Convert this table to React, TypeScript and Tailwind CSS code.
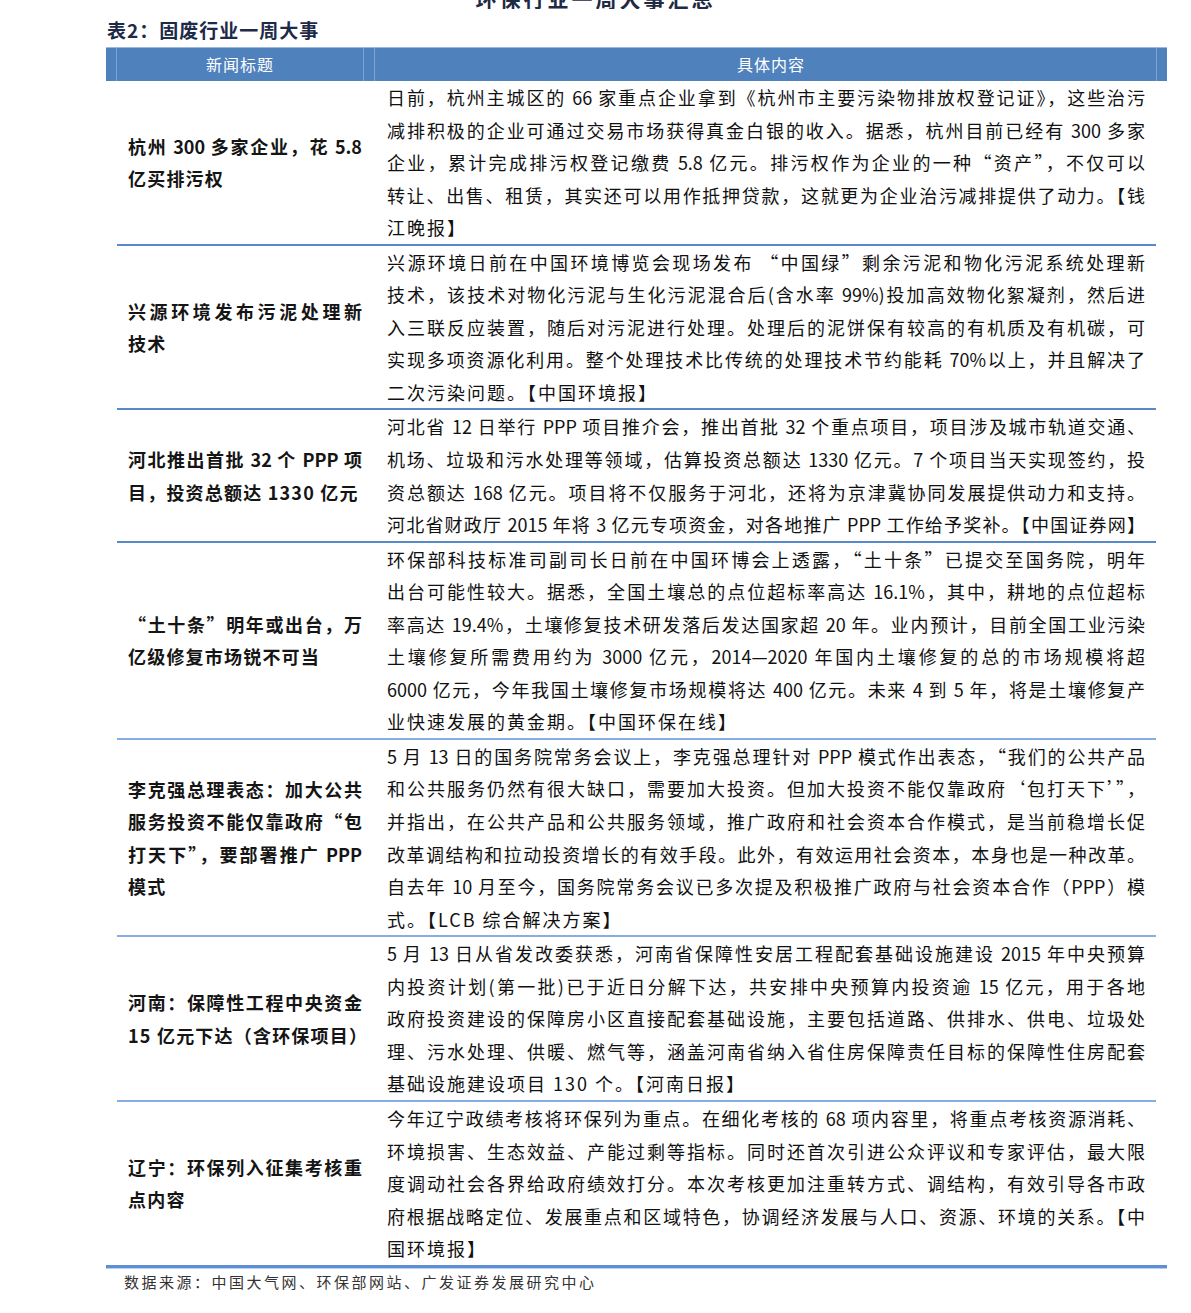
const FONT = "font-['Noto_Sans_CJK_SC','Noto_Sans',sans-serif]";

type Row = {
  title: string[];
  body: string[];
  thin?: boolean;
};

const ROWS: Row[] = [
  {
    title: ["杭州 300 多家企业，花 5.8", "亿买排污权"],
    body: [
      "日前，杭州主城区的 66 家重点企业拿到《杭州市主要污染物排放权登记证》，这些治污",
      "减排积极的企业可通过交易市场获得真金白银的收入。据悉，杭州目前已经有 300 多家",
      "企业，累计完成排污权登记缴费 5.8 亿元。排污权作为企业的一种“资产”，不仅可以",
      "转让、出售、租赁，其实还可以用作抵押贷款，这就更为企业治污减排提供了动力。【钱",
      "江晚报】",
    ],
  },
  {
    title: ["兴源环境发布污泥处理新", "技术"],
    body: [
      "兴源环境日前在中国环境博览会现场发布 “中国绿”剩余污泥和物化污泥系统处理新",
      "技术，该技术对物化污泥与生化污泥混合后(含水率 99%)投加高效物化絮凝剂，然后进",
      "入三联反应装置，随后对污泥进行处理。处理后的泥饼保有较高的有机质及有机碳，可",
      "实现多项资源化利用。整个处理技术比传统的处理技术节约能耗 70%以上，并且解决了",
      "二次污染问题。【中国环境报】",
    ],
  },
  {
    title: ["河北推出首批 32 个 PPP 项", "目，投资总额达 1330 亿元"],
    body: [
      "河北省 12 日举行 PPP 项目推介会，推出首批 32 个重点项目，项目涉及城市轨道交通、",
      "机场、垃圾和污水处理等领域，估算投资总额达 1330 亿元。7 个项目当天实现签约，投",
      "资总额达 168 亿元。项目将不仅服务于河北，还将为京津冀协同发展提供动力和支持。",
      "河北省财政厅 2015 年将 3 亿元专项资金，对各地推广 PPP 工作给予奖补。【中国证券网】",
    ],
  },
  {
    title: ["“土十条”明年或出台，万", "亿级修复市场锐不可当"],
    thin: true,
    body: [
      "环保部科技标准司副司长日前在中国环博会上透露，“土十条”已提交至国务院，明年",
      "出台可能性较大。据悉，全国土壤总的点位超标率高达 16.1%，其中，耕地的点位超标",
      "率高达 19.4%，土壤修复技术研发落后发达国家超 20 年。业内预计，目前全国工业污染",
      "土壤修复所需费用约为 3000 亿元，2014—2020 年国内土壤修复的总的市场规模将超",
      "6000 亿元，今年我国土壤修复市场规模将达 400 亿元。未来 4 到 5 年，将是土壤修复产",
      "业快速发展的黄金期。【中国环保在线】",
    ],
  },
  {
    title: ["李克强总理表态：加大公共", "服务投资不能仅靠政府“包", "打天下”，要部署推广 PPP", "模式"],
    thin: true,
    body: [
      "5 月 13 日的国务院常务会议上，李克强总理针对 PPP 模式作出表态，“我们的公共产品",
      "和公共服务仍然有很大缺口，需要加大投资。但加大投资不能仅靠政府‘包打天下’”，",
      "并指出，在公共产品和公共服务领域，推广政府和社会资本合作模式，是当前稳增长促",
      "改革调结构和拉动投资增长的有效手段。此外，有效运用社会资本，本身也是一种改革。",
      "自去年 10 月至今，国务院常务会议已多次提及积极推广政府与社会资本合作（PPP）模",
      "式。【LCB 综合解决方案】",
    ],
  },
  {
    title: ["河南：保障性工程中央资金", "15 亿元下达（含环保项目）"],
    thin: true,
    body: [
      "5 月 13 日从省发改委获悉，河南省保障性安居工程配套基础设施建设 2015 年中央预算",
      "内投资计划(第一批)已于近日分解下达，共安排中央预算内投资逾 15 亿元，用于各地",
      "政府投资建设的保障房小区直接配套基础设施，主要包括道路、供排水、供电、垃圾处",
      "理、污水处理、供暖、燃气等，涵盖河南省纳入省住房保障责任目标的保障性住房配套",
      "基础设施建设项目 130 个。【河南日报】",
    ],
  },
  {
    title: ["辽宁：环保列入征集考核重", "点内容"],
    body: [
      "今年辽宁政绩考核将环保列为重点。在细化考核的 68 项内容里，将重点考核资源消耗、",
      "环境损害、生态效益、产能过剩等指标。同时还首次引进公众评议和专家评估，最大限",
      "度调动社会各界给政府绩效打分。本次考核更加注重转方式、调结构，有效引导各市政",
      "府根据战略定位、发展重点和区域特色，协调经济发展与人口、资源、环境的关系。【中",
      "国环境报】",
    ],
  },
];

// last lines keep natural width unless they run the full column
function Lines({
  lines,
  className,
  lastTracking,
}: {
  lines: string[];
  className: string;
  lastTracking: string;
}) {
  return (
    <>
      {lines.map((line, i) => {
        const last = i === lines.length - 1;
        const cls =
          !last || line.length >= 30
            ? " text-justify [text-align-last:justify]"
            : ` whitespace-pre ${lastTracking}`;
        return (
          <div key={i} className={className + cls}>
            {line}
          </div>
        );
      })}
    </>
  );
}

function NewsRow({ row, isLast }: { row: Row; isLast: boolean }) {
  return (
    <div>
      <div className="flex">
        <div className="flex w-[259px] flex-col justify-center pl-[22px] pr-[3px]">
          <Lines
            lines={row.title}
            lastTracking="tracking-[1.2px]"
            className="text-[18px] font-bold leading-[32.5px] text-[#151515]"
          />
        </div>
        <div className="w-[780px] pl-[22px]">
          <Lines
            lines={row.body}
            lastTracking="tracking-[2px]"
            className="text-[18px] leading-[32.55px] text-[#111]"
          />
        </div>
      </div>
      {isLast ? (
        <div>
          <div className="h-[3px] bg-[#5e8fd4]" />
          <div className="h-[1px] bg-[#b9cfee]" />
        </div>
      ) : row.thin ? (
        <div className="mx-[11px] h-[2px] bg-[#86aee4]" />
      ) : (
        <div className="mx-[11px] h-[2px] bg-[#5a89c9]" />
      )}
    </div>
  );
}

export default function App() {
  return (
    <div className={`min-h-[1313px] w-[1191px] bg-white ${FONT}`}>
      <div className="h-[9px] overflow-hidden">
        <div className="-mt-[12px] text-center text-[21px] font-bold leading-[20px] tracking-[3px] text-[#1f2a44]">
          环保行业一周大事汇总
        </div>
      </div>

      <div className="ml-[107px] mt-[9px] text-[19px] font-bold leading-[24px] tracking-[1px] text-[#1d2a48]">
        表2：固废行业一周大事
      </div>

      <div className="ml-[106px] mt-[5px] w-[1061px]">
        <div className="border-t border-[#9ab8e0] bg-[#4f81bd]">
          <div className="flex h-[33px] text-[16px] leading-[33px] text-white">
            <div className="w-[10px]" />
            <div className="w-[248px] border-x border-[#7fa3d3] text-center tracking-[1px]">
              新闻标题
            </div>
            <div className="w-[11px] border-r border-[#7fa3d3]" />
            <div className="w-[11px]" />
            <div className="flex-1 border-r border-[#7fa3d3] text-center tracking-[1px]">
              具体内容
            </div>
            <div className="w-[10px]" />
          </div>
        </div>

        {ROWS.map((row, i) => (
          <NewsRow key={i} row={row} isLast={i === ROWS.length - 1} />
        ))}

        <div className="ml-[18px] mt-[2px] text-[15px] leading-[22px] tracking-[2.5px] text-[#333]">
          数据来源：中国大气网、环保部网站、广发证券发展研究中心
        </div>
      </div>
    </div>
  );
}
